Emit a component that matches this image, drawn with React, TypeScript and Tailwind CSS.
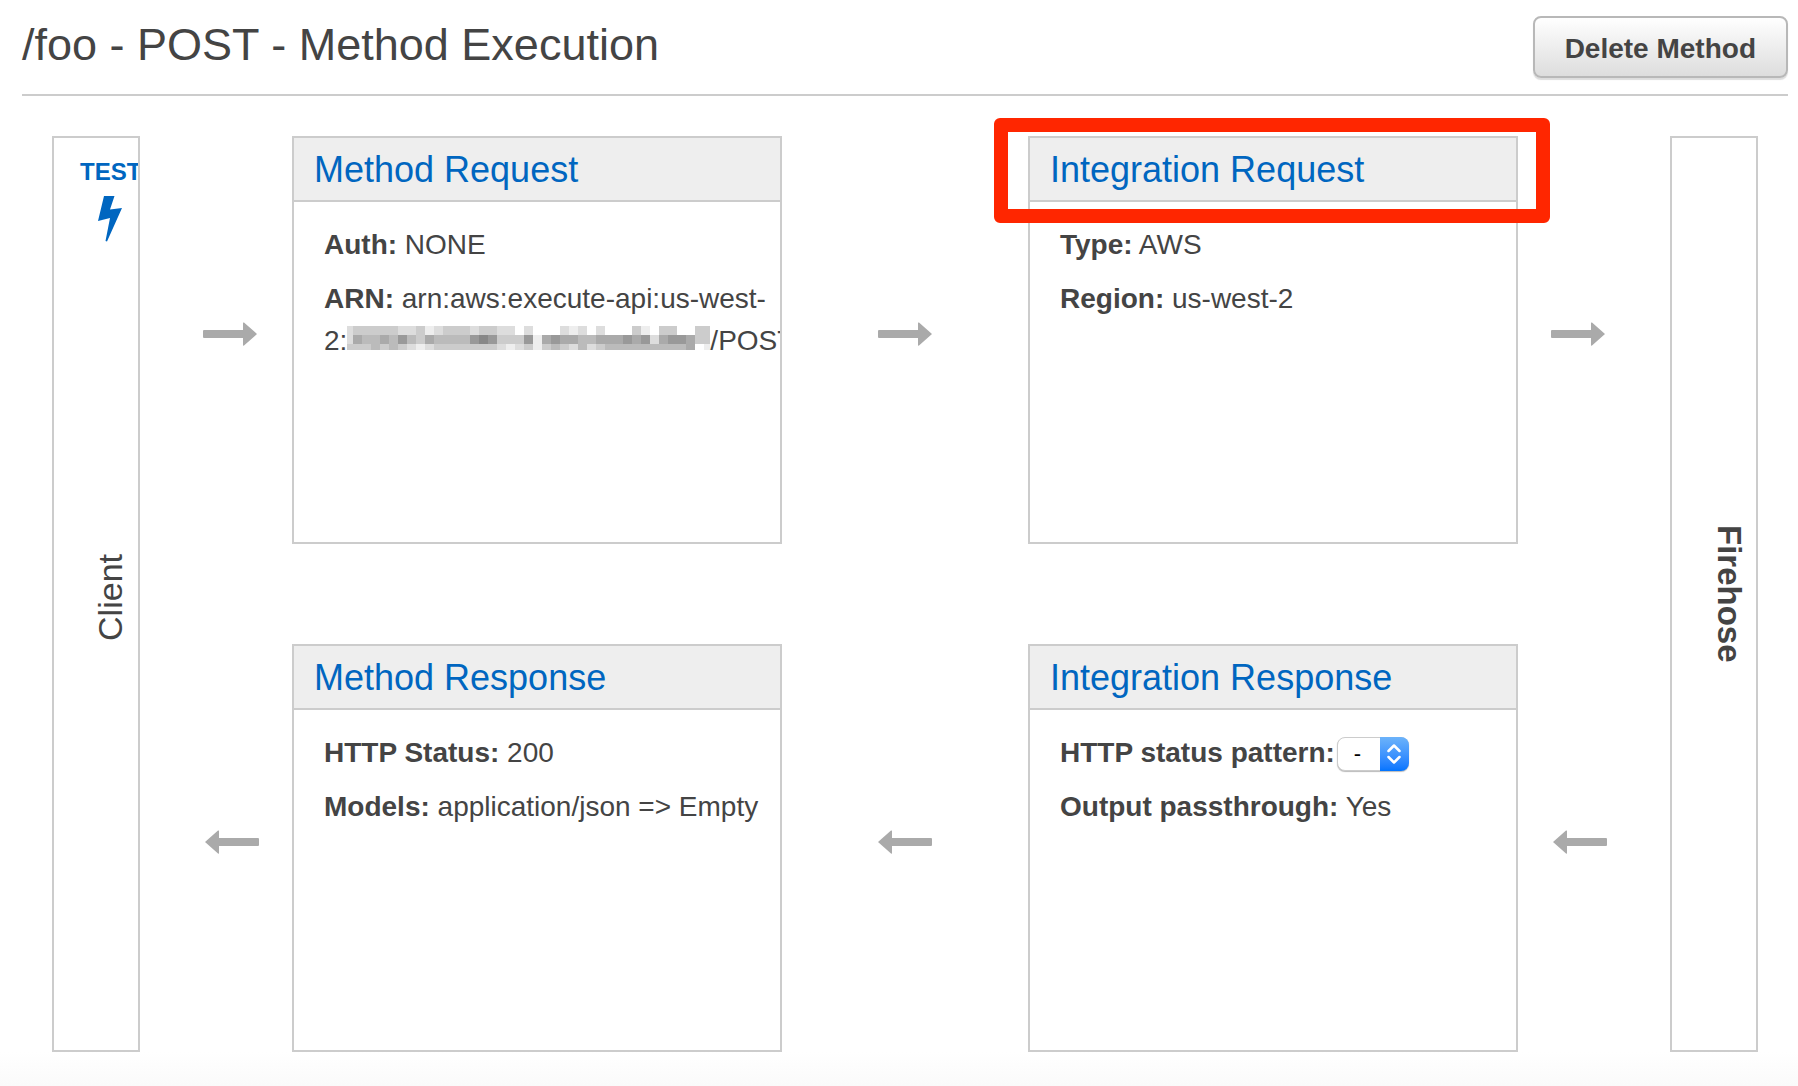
import { ReactNode } from "react";

// grey levels of the masked account id, one hex digit per cell, one string per row
const MASK_ROWS = [
  "dcccccddcedcccdccddfdfffdedfdfffcefccffcc",
  "dabbab9bcabbbb989ccc9ea9aabbaaa9a9da99acc",
  "cccbcbcdedcccccccdedcecbcdbdcbbbbbbbbbafe",
];

interface IArrow {
  left?: boolean;
}

function Arrow({ left }: IArrow) {
  return (
    <svg
      className="w-[54px] h-6 shrink-0"
      viewBox="0 0 54 24"
      fill="#aaaaaa"
      aria-hidden="true"
    >
      {left ? (
        <path d="M0 12 13 0.6Q14 0 14 1V8H53Q54 8 54 9V15Q54 16 53 16H14V23Q14 24 13 23.4Z" />
      ) : (
        <path d="M54 12 41 0.6Q40 0 40 1V8H1Q0 8 0 9V15Q0 16 1 16H40V23Q40 24 41 23.4Z" />
      )}
    </svg>
  );
}

function Mask() {
  return (
    <svg
      className="inline-block align-baseline w-[363px] h-6"
      viewBox="0 0 363 24"
      shapeRendering="crispEdges"
      aria-hidden="true"
    >
      {MASK_ROWS.map((row, y) =>
        row
          .split("")
          .map((level, x) => (
            <rect
              key={`${x}-${y}`}
              x={x * 9 - 3}
              y={y * 9}
              width={9}
              height={9}
              fill={`#${level.repeat(6)}`}
            />
          ))
      )}
    </svg>
  );
}

interface ICard {
  title: string;
  children: ReactNode;
}

function Card({ title, children }: ICard) {
  return (
    <section className="min-h-[408px] h-full border-2 border-[#cccccc] overflow-hidden">
      <h2 className="bg-[#eeeeee] border-b-2 border-[#cccccc] px-5 pt-0.5 text-[36px] leading-[60px]">
        <a href="#" className="text-[#0066c0]">
          {title}
        </a>
      </h2>
      <div className="flex flex-col gap-3 pt-[22px] pl-[30px] text-[28px] leading-[42px] whitespace-nowrap">
        {children}
      </div>
    </section>
  );
}

function App() {
  return (
    <main className="min-h-screen flex flex-col bg-white text-[#444444] font-['Helvetica_Neue','Liberation_Sans',Arial,sans-serif]">
      <header className="ml-[22px] mr-2.5 pt-4 pb-4 flex items-start justify-between border-b-2 border-[#cccccc]">
        <h1 className="text-[45px] leading-[58px]">
          /foo - POST - Method Execution
        </h1>
        <button className="h-[62px] px-[30px] pt-1 rounded-lg border-2 border-[#b8b8b8] bg-linear-to-b from-white to-[#dddddd] shadow-[0_2px_1px_#dddddd] text-[28px] font-bold">
          Delete Method
        </button>
      </header>

      <div className="ml-[52px] mr-10 mt-10 grid grid-cols-[88px_152fr_490fr_246fr_490fr_152fr_88px] gap-y-[100px]">
        <div className="row-span-2 relative border-2 border-[#cccccc] overflow-hidden flex items-center justify-center">
          <a
            href="#"
            className="absolute top-5 left-[26px] flex flex-col text-[#0066c0] text-2xl leading-[28px] font-bold"
          >
            TEST
            <svg
              className="w-6 h-[46px] ml-[18px] mt-2.5"
              viewBox="0 0 24 46"
              fill="currentColor"
              aria-hidden="true"
            >
              <path d="M6 0H16.5L12 13.5 24 12 9 45.5 7.5 45 12 22 0 25Z" />
            </svg>
          </a>
          <span className="[writing-mode:vertical-rl] rotate-180 ml-7 mt-1.5 text-[34px] leading-10">
            Client
          </span>
        </div>

        <div className="flex items-center justify-center pl-7 pb-3">
          <Arrow />
        </div>
        <Card title="Method Request">
          <p>
            <b>Auth:</b> NONE
          </p>
          <p>
            <b>ARN:</b> arn:aws:execute-api:us-west-
            <br />
            2:
            <Mask />
            /POST
          </p>
        </Card>
        <div className="flex items-center justify-center pb-3">
          <Arrow />
        </div>
        <div className="relative">
          <Card title="Integration Request">
            <p>
              <b>Type:</b> AWS
            </p>
            <p>
              <b>Region:</b> us-west-2
            </p>
          </Card>
          <div className="absolute -top-[18px] -left-[34px] -right-8 h-[105px] border-[14px] border-[#ff2600] rounded-md pointer-events-none" />
        </div>
        <div className="flex items-center justify-center pr-8 pb-3">
          <Arrow />
        </div>

        <div className="row-span-2 border-2 border-[#cccccc] flex items-center justify-center">
          <span className="[writing-mode:vertical-rl] ml-[30px] text-[33px] leading-10 font-bold">
            Firehose
          </span>
        </div>

        <div className="flex items-center justify-center pl-8 pb-3">
          <Arrow left />
        </div>
        <Card title="Method Response">
          <p>
            <b>HTTP Status:</b> 200
          </p>
          <p>
            <b>Models:</b> application/json =&gt; Empty
          </p>
        </Card>
        <div className="flex items-center justify-center pb-3">
          <Arrow left />
        </div>
        <Card title="Integration Response">
          <div className="flex items-center">
            <label htmlFor="pattern" className="font-bold">
              HTTP status pattern:
            </label>
            <div className="relative ml-0.5 mt-0.5 flex">
              <select
                id="pattern"
                className="appearance-none w-[72px] h-[34px] pl-4 rounded-lg border border-[#cccccc] bg-white shadow-[0_1px_1px_#bbbbbb] text-[22px] leading-8 text-black"
              >
                <option>-</option>
              </select>
              <span className="absolute right-0 inset-y-0 w-[29px] rounded-r-lg bg-linear-to-b from-[#6cb3fa] to-[#0074ff] flex items-center justify-center pointer-events-none">
                <svg
                  className="w-4 h-5"
                  viewBox="0 0 16 20"
                  fill="none"
                  stroke="white"
                  strokeWidth="2.5"
                  strokeLinecap="round"
                  strokeLinejoin="round"
                  aria-hidden="true"
                >
                  <path d="M2.5 7 8 1.5 13.5 7M2.5 13 8 18.5 13.5 13" />
                </svg>
              </span>
            </div>
          </div>
          <p>
            <b>Output passthrough:</b> Yes
          </p>
        </Card>
        <div className="flex items-center justify-center pr-7 pb-3">
          <Arrow left />
        </div>
      </div>

      <div className="grow bg-linear-to-b from-white to-[#fafafa]" />
    </main>
  );
}

export default App;
